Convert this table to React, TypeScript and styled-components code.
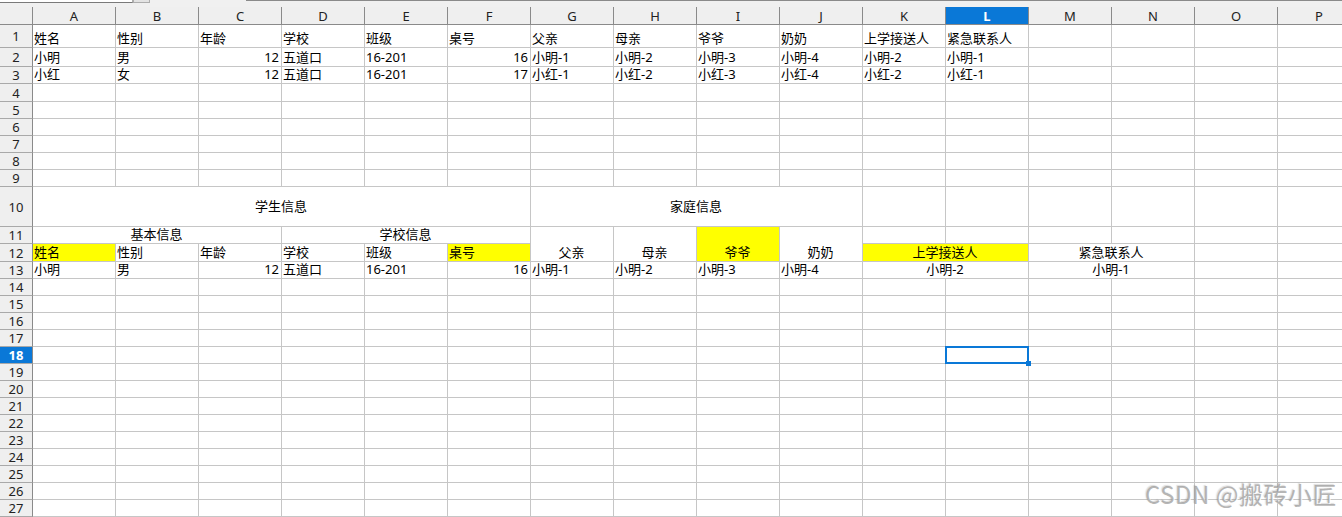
import React from 'react';
import styled, { createGlobalStyle, css } from 'styled-components';

const GlobalStyle = createGlobalStyle`
  html, body { margin: 0; padding: 0; background: #fff; overflow: hidden; }
  body { font-family: "Noto Sans", "Noto Sans CJK SC", sans-serif; }
  #root { width: 1342px; height: 517px; overflow: hidden; position: relative; }
`;

const COLS = 'ABCDEFGHIJKLMNOP'.split('');
const COL_W = 83;
const ROW_H = [23, 19, 17, 18, 17, 17, 17, 17, 17, 40, 17, 18, ...Array(15).fill(17)];
const BLUE = '#0a78d7';
const GRID = '#c6c6c6';
const HEAD_LINE = '#8a8a8a';

type HAlign = 'left' | 'right' | 'center';
type VAlign = 'end' | 'center';

interface CellDef {
  text?: string;
  h?: HAlign;
  v?: VAlign;
  cs?: number;
  rs?: number;
  fill?: string;
}

const Page = styled.div`
  display: flex;
  flex-direction: column;
  width: 1342px;
  height: 517px;
  overflow: hidden;
`;

const Toolbar = styled.div`
  height: 7px;
  flex: none;
  background: #f0f0f0;
  display: flex;
  align-items: flex-start;
`;

const NameBox = styled.div`
  width: 132px;
  height: 2px;
  background: #fff;
  border-bottom: 1px solid #7a7a7a;
  border-right: 1px solid #adadad;
`;

const DropButton = styled.div`
  width: 15px;
  height: 2px;
  background: #e3e3e3;
  border: 1px solid #adadad;
  border-top: none;
`;

const FormulaBox = styled.div`
  margin-left: 96px;
  flex: 1;
  height: 0;
  border-bottom: 1px solid #8a8a8a;
`;

const Sheet = styled.div`
  display: grid;
  grid-template-columns: 33px repeat(16, ${COL_W}px);
  grid-template-rows: 18px ${ROW_H.map((h) => `${h}px`).join(' ')};
  font-size: 13px;
  color: #000;
`;

const headBase = css`
  background: #efefef;
  color: #222;
  display: flex;
  align-items: center;
  justify-content: center;
  font-family: "Noto Sans", "Liberation Sans", sans-serif;
  font-size: 13px;
  line-height: 16px;
`;

const Corner = styled.div`
  ${headBase};
  grid-column: 1;
  grid-row: 1;
  border-right: 1px solid ${HEAD_LINE};
  border-bottom: 1px solid ${HEAD_LINE};
`;

const ColHead = styled.div<{ $c: number; $active?: boolean }>`
  ${headBase};
  grid-row: 1;
  grid-column: ${(p) => p.$c + 2};
  border-right: 1px solid ${HEAD_LINE};
  border-bottom: 1px solid ${HEAD_LINE};
  ${(p) =>
    p.$active &&
    css`
      background: ${BLUE};
      color: #fff;
      font-weight: 700;
    `}
`;

const RowHead = styled.div<{ $row: number; $active?: boolean }>`
  ${headBase};
  grid-column: 1;
  grid-row: ${(p) => p.$row + 1};
  border-right: 1px solid ${HEAD_LINE};
  border-bottom: 1px solid #a9a9a9;
  ${(p) =>
    p.$active &&
    css`
      background: ${BLUE};
      color: #fff;
      font-weight: 700;
    `}
`;

const Cell = styled.div<{
  $c: number;
  $row: number;
  $cs: number;
  $rs: number;
  $h: HAlign;
  $v: VAlign;
  $fill?: string;
}>`
  position: relative;
  grid-column: ${(p) => p.$c + 2} / span ${(p) => p.$cs};
  grid-row: ${(p) => p.$row + 1} / span ${(p) => p.$rs};
  border-right: 1px solid ${GRID};
  border-bottom: 1px solid ${GRID};
  background: ${(p) => p.$fill || '#fff'};
  display: flex;
  align-items: ${(p) => (p.$v === 'center' ? 'center' : 'flex-end')};
  justify-content: ${(p) =>
    p.$h === 'right' ? 'flex-end' : p.$h === 'center' ? 'center' : 'flex-start'};
  padding: 0 2px 1px 1px;
  line-height: 16px;
  white-space: nowrap;
  overflow: visible;
  font-family: "Noto Sans", "Noto Sans CJK SC", sans-serif;
`;

const Selection = styled.div`
  position: absolute;
  z-index: 5;
  left: -1px;
  top: -1px;
  right: -1px;
  bottom: -1px;
  border: 2px solid ${BLUE};
  pointer-events: none;
`;

const FillHandle = styled.div`
  position: absolute;
  right: -4px;
  bottom: -4px;
  width: 5px;
  height: 5px;
  background: ${BLUE};
`;

const Watermark = styled.div`
  position: absolute;
  right: 5px;
  bottom: 9px;
  z-index: 10;
  font-family: "Noto Sans CJK SC", sans-serif;
  font-size: 24px;
  line-height: 28px;
  color: rgba(150, 150, 150, 0.7);
  text-shadow: 1px 1px 0 rgba(255, 255, 255, 0.9), -1px -1px 1px rgba(120, 120, 120, 0.25);
  letter-spacing: 0.5px;
  white-space: nowrap;
`;

const YELLOW = '#ffff00';

const headerRow = ['姓名', '性别', '年龄', '学校', '班级', '桌号', '父亲', '母亲', '爷爷', '奶奶', '上学接送人', '紧急联系人'];
const row2 = ['小明', '男', '12', '五道口', '16-201', '16', '小明-1', '小明-2', '小明-3', '小明-4', '小明-2', '小明-1'];
const row3 = ['小红', '女', '12', '五道口', '16-201', '17', '小红-1', '小红-2', '小红-3', '小红-4', '小红-2', '小红-1'];

const isNum = (s: string) => /^\d+$/.test(s);

function buildCells(): Record<string, CellDef> {
  const m: Record<string, CellDef> = {};
  const put = (r: number, c: number, d: CellDef) => {
    m[`${r}-${c}`] = d;
  };
  [headerRow, row2, row3].forEach((row, i) => {
    row.forEach((t, c) => put(i + 1, c, { text: t, h: isNum(t) ? 'right' : 'left' }));
  });
  put(10, 0, { text: '学生信息', cs: 6, h: 'center', v: 'center' });
  put(10, 6, { text: '家庭信息', cs: 4, h: 'center', v: 'center' });
  put(11, 0, { text: '基本信息', cs: 3, h: 'center' });
  put(11, 3, { text: '学校信息', cs: 3, h: 'center' });
  put(11, 6, { text: '父亲', rs: 2, h: 'center' });
  put(11, 7, { text: '母亲', rs: 2, h: 'center' });
  put(11, 8, { text: '爷爷', rs: 2, h: 'center', fill: YELLOW });
  put(11, 9, { text: '奶奶', rs: 2, h: 'center' });
  ['姓名', '性别', '年龄', '学校', '班级', '桌号'].forEach((t, c) =>
    put(12, c, { text: t, fill: c === 0 || c === 5 ? YELLOW : undefined })
  );
  put(12, 10, { text: '上学接送人', cs: 2, h: 'center', fill: YELLOW });
  put(12, 12, { text: '紧急联系人', cs: 2, h: 'center' });
  row2.slice(0, 10).forEach((t, c) => put(13, c, { text: t, h: isNum(t) ? 'right' : 'left' }));
  put(13, 10, { text: '小明-2', cs: 2, h: 'center' });
  put(13, 12, { text: '小明-1', cs: 2, h: 'center' });
  return m;
}

const SEL_R = 18;
const SEL_C = 11;

export default function App() {
  const defs = buildCells();
  const covered = new Set<string>();
  Object.entries(defs).forEach(([k, d]) => {
    const [r, c] = k.split('-').map(Number);
    for (let i = 0; i < (d.rs || 1); i++)
      for (let j = 0; j < (d.cs || 1); j++) if (i || j) covered.add(`${r + i}-${c + j}`);
  });

  const cells: React.ReactNode[] = [];
  ROW_H.forEach((_, ri) => {
    const r = ri + 1;
    cells.push(
      <RowHead key={`rh${r}`} $row={r} $active={r === SEL_R}>
        {r}
      </RowHead>
    );
    COLS.forEach((_, c) => {
      const key = `${r}-${c}`;
      if (covered.has(key)) return;
      const d = defs[key] || {};
      cells.push(
        <Cell
          key={key}
          $row={r}
          $c={c}
          $cs={d.cs || 1}
          $rs={d.rs || 1}
          $h={d.h || 'left'}
          $v={d.v || 'end'}
          $fill={d.fill}
        >
          {d.text}
          {r === SEL_R && c === SEL_C && (
            <Selection>
              <FillHandle />
            </Selection>
          )}
        </Cell>
      );
    });
  });

  return (
    <Page>
      <GlobalStyle />
      <Toolbar>
        <NameBox />
        <DropButton />
        <FormulaBox />
      </Toolbar>
      <Sheet>
        <Corner />
        {COLS.map((l, c) => (
          <ColHead key={l} $c={c} $active={c === SEL_C}>
            {l}
          </ColHead>
        ))}
        {cells}
      </Sheet>
      <Watermark>CSDN @搬砖小匠</Watermark>
    </Page>
  );
}
